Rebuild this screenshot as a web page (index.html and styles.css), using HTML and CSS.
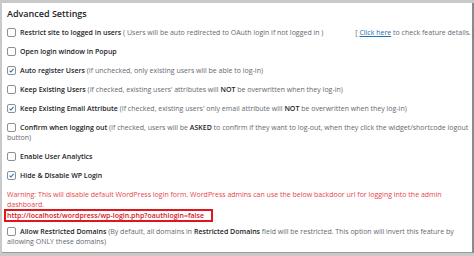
FILE: index.html
```html
<!DOCTYPE html>
<html>
<head>
<meta charset="utf-8">
<link rel="stylesheet" href="styles.css">
</head>
<body>
<div class="frame">
  <div class="panel">
    <h2 class="title">Advanced Settings</h2>
    <div class="opt">
      <span class="cb"></span>
      <span class="txt"><b>Restrict site to logged in users</b> ( Users will be auto redirected to OAuth login if not logged in )</span>
      <span class="more">[ <a href="#">Click here</a> to check feature details. ]</span>
    </div>
    <div class="opt">
      <span class="cb"></span>
      <span class="txt"><b>Open login window in Popup</b></span>
    </div>
    <div class="opt">
      <span class="cb on"><svg viewBox="0 0 10 10"><path d="M2.2 5.2 L4.2 7.2 L7.9 2.8" /></svg></span>
      <span class="txt"><b>Auto register Users</b> (If unchecked, only existing users will be able to log-in)</span>
    </div>
    <div class="opt">
      <span class="cb"></span>
      <span class="txt"><b>Keep Existing Users</b> (If checked, existing users' attributes will <b>NOT</b> be overwritten when they log-in)</span>
    </div>
    <div class="opt">
      <span class="cb on"><svg viewBox="0 0 10 10"><path d="M2.2 5.2 L4.2 7.2 L7.9 2.8" /></svg></span>
      <span class="txt"><b>Keep Existing Email Attribute</b> (If checked, existing users' only email attribute will <b>NOT</b> be overwritten when they log-in)</span>
    </div>
    <div class="opt wrap">
      <span class="cb"></span><b>Confirm when logging out</b> (If checked, users will be <b>ASKED</b> to confirm if they want to log-out, when they click the widget/shortcode logout button)
    </div>
    <div class="opt">
      <span class="cb"></span>
      <span class="txt"><b>Enable User Analytics</b></span>
    </div>
    <div class="opt">
      <span class="cb on"><svg viewBox="0 0 10 10"><path d="M2.2 5.2 L4.2 7.2 L7.9 2.8" /></svg></span>
      <span class="txt"><b>Hide &amp; Disable WP Login</b></span>
    </div>
    <p class="warn">Warning: This will disable default WordPress login form. WordPress admins can use the below backdoor url for logging into the admin dashboard.</p>
    <div class="url">http://localhost/wordpress/wp-login.php?oauthlogin=false</div>
    <div class="opt wrap last">
      <span class="cb"></span><b>Allow Restricted Domains</b> (By default, all domains in <b>Restricted Domains</b> field will be restricted. This option will invert this feature by allowing ONLY these domains)
    </div>
  </div>
</div>
</body>
</html>
```
FILE: styles.css
```css
html, body {
  margin: 0;
  padding: 0;
  background: #dcdcdc;
}
.frame {
  width: 474px;
  height: 256px;
  box-sizing: border-box;
  padding: 3px 0 0 2px;
  overflow: hidden;
  background: #c9c9c9;
}
.panel {
  width: 472px;
  height: 250px;
  box-sizing: border-box;
  background: #fff;
  border-right: 2px solid #8a8a8a;
  border-bottom: 1px solid #9a9a9a;
  padding: 4px 0 0 5px;
  font-family: "Open Sans", "Noto Sans", sans-serif;
  font-size: 7px;
  color: #646970;
}
.title {
  margin: 0 0 8px 0;
  font-size: 9px;
  font-weight: 600;
  color: #1d2327;
  line-height: 13px;
}
.opt {
  display: flex;
  align-items: flex-start;
  line-height: 10px;
  height: 10px;
  margin-bottom: 9px;
  white-space: nowrap;
}
.opt b {
  font-weight: 600;
  color: #1d2327;
}
.cb {
  display: inline-block;
  width: 9px;
  height: 9px;
  box-sizing: border-box;
  border: 1px solid #8c8f94;
  border-radius: 2px;
  margin: 0 4px 0 0;
  flex: none;
  vertical-align: top;
  background: #fff;
}
.cb svg {
  display: block;
  width: 7px;
  height: 7px;
}
.cb svg path {
  fill: none;
  stroke: #2271b1;
  stroke-width: 1.5;
}
.txt {
  flex: none;
}
.more {
  margin-left: auto;
  margin-right: -3px;
  color: #646970;
}
.more a {
  color: #2271b1;
  text-decoration: underline;
}
.wrap {
  display: block;
  height: auto;
  white-space: normal;
}
.wrap .cb {
  margin-right: 4px;
}
.warn {
  margin: 0;
  width: 440px;
  color: #e8444a;
  line-height: 10px;
}
.url {
  width: 209px;
  height: 13px;
  box-sizing: border-box;
  border: 2px solid #e0161f;
  margin: -1px 0 5px -3px;
  padding-left: 1px;
  line-height: 9px;
  color: #d6141c;
  font-weight: 600;
  white-space: nowrap;
}
.last {
  margin-bottom: 0;
}
```
